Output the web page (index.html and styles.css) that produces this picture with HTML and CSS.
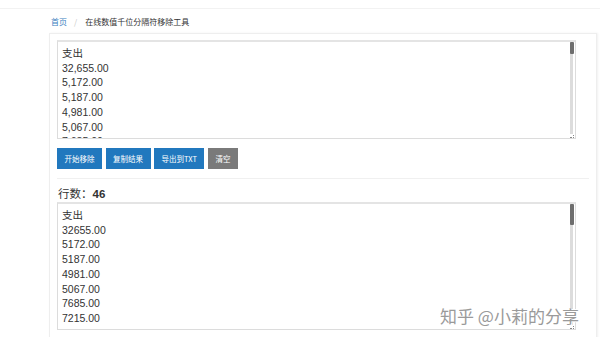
FILE: index.html
```html
<!DOCTYPE html>
<html lang="zh-CN">
<head>
<meta charset="utf-8">
<title>在线数值千位分隔符移除工具</title>
<link rel="stylesheet" href="styles.css">
</head>
<body>
<div class="topline"></div>
<nav class="breadcrumb">
  <a class="crumb-link" href="#">首页</a>
  <span class="crumb-sep">/</span>
  <span class="crumb-active">在线数值千位分隔符移除工具</span>
</nav>
<main class="card">
  <div class="box box-input">
    <div class="box-text">支出
32,655.00
5,172.00
5,187.00
4,981.00
5,067.00
7,685.00
7,215.00
6,648.00
5,302.00</div>
    <div class="scroll">
      <div class="track"><div class="thumb thumb-input"></div></div>
      <div class="grip"></div>
    </div>
  </div>
  <div class="actions">
    <button class="btn btn-blue">开始移除</button>
    <button class="btn btn-blue">复制结果</button>
    <button class="btn btn-blue">导出到TXT</button>
    <button class="btn btn-gray">清空</button>
  </div>
  <div class="divider"></div>
  <div class="count">行数：<b>46</b></div>
  <div class="box box-output">
    <div class="box-text">支出
32655.00
5172.00
5187.00
4981.00
5067.00
7685.00
7215.00
6648.00
5302.00
4896.00</div>
    <div class="scroll">
      <div class="track"><div class="thumb thumb-output"></div></div>
      <div class="grip"></div>
    </div>
  </div>
</main>
<div class="watermark">知乎 @小莉的分享</div>
</body>
</html>
```
FILE: styles.css
```css
html, body {
  margin: 0;
  padding: 0;
  background: #fff;
  height: 337px;
  overflow: hidden;
}
body {
  font-family: "Liberation Sans", "Noto Sans CJK SC", sans-serif;
  color: #333;
  position: relative;
}
.topline {
  height: 8px;
  border-bottom: 1px solid #f2f2f2;
}
.breadcrumb {
  display: flex;
  align-items: center;
  height: 24px;
  padding-left: 51px;
  font-size: 8px;
  font-family: "Noto Sans CJK SC", sans-serif;
}
.crumb-link {
  color: #3c7fbf;
  text-decoration: none;
}
.crumb-sep {
  color: #c8c8c8;
  margin: 0 8px 0 7px;
}
.crumb-active {
  color: #333;
}
.card {
  margin-left: 49px;
  width: 532px;
  border: 1px solid #eee;
  border-bottom: none;
  box-shadow: 1px 0 2px rgba(0,0,0,0.06);
  padding: 6px 7px 20px 7px;
  display: flex;
  flex-direction: column;
}
.box {
  display: flex;
  width: 519px;
  box-sizing: border-box;
  border: 1px solid #dcdcdc;
  border-top-width: 2px;
  border-top-color: #e4e4e4;
  background: #fff;
}
.box-text {
  flex: 1;
  overflow: hidden;
  white-space: pre;
  padding: 4px 0 0 4px;
  font-size: 10.5px;
  line-height: 14.7px;
  color: #333;
}
.scroll {
  width: 5px;
  display: flex;
  flex-direction: column;
  padding-right: 1px;
}
.track {
  flex: 1;
  background: #dcdcdc;
  margin-left: 1px;
  width: 3px;
}
.thumb {
  width: 4px;
  margin-left: -0.5px;
  background: #6e6e6e;
  border-radius: 1px;
}
.thumb-input {
  height: 12px;
}
.thumb-output {
  height: 21px;
}
.grip {
  height: 3px;
  margin: 1px 0 0 1px;
  width: 4px;
  border-bottom: 1px dotted #888;
  border-right: 1px dotted #888;
  box-sizing: border-box;
}
.box-input {
  height: 99px;
}
.box-output {
  height: 128px;
}
.actions {
  display: flex;
  gap: 3.5px;
  margin-top: 9px;
}
.btn {
  height: 21px;
  padding: 0 7.5px;
  border: none;
  color: #fff;
  font-family: "Noto Sans CJK SC", sans-serif;
  font-size: 7.5px;
  line-height: 21px;
  cursor: pointer;
}
.btn-blue {
  background: #2178be;
}
.btn-gray {
  background: #7a7a7a;
}
.divider {
  height: 1px;
  background: #f0f0f0;
  margin: 9px 0 0 0;
}
.count {
  font-family: "Noto Sans CJK SC", sans-serif;
  font-size: 11.5px;
  line-height: 16px;
  margin: 6px 0 0 1px;
}
.count b {
  font-family: "Liberation Sans", sans-serif;
  font-weight: bold;
}
.watermark {
  position: absolute;
  left: 440px;
  top: 303px;
  font-family: "Noto Sans CJK SC", sans-serif;
  font-size: 17px;
  color: #9a9a9a;
  text-shadow: 1px 1px 0 #fff, -1px -1px 0 #fff;
  white-space: nowrap;
}
```
